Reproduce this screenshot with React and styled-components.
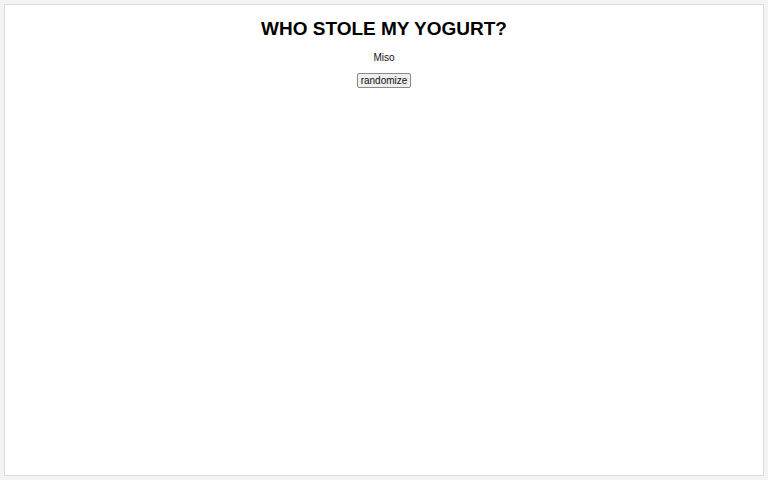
import React, { useState } from "react";
import styled, { createGlobalStyle } from "styled-components";

const Global = createGlobalStyle`
  html, body { margin: 0; padding: 0; height: 100%; }
  body { background: #f3f3f3; font-family: "Liberation Sans", Arial, sans-serif; }
  #root { height: 100%; }
`;

const Page = styled.div`
  box-sizing: border-box;
  height: 480px;
  padding: 4px;
  display: flex;
`;

const Card = styled.main`
  flex: 1;
  background: #ffffff;
  border: 1px solid #dcdcdc;
  display: flex;
  flex-direction: column;
  align-items: center;
  padding-top: 12px;
`;

const Title = styled.h1`
  margin: 0;
  font-size: 19px;
  font-weight: bold;
  color: #000;
  line-height: 23px;
`;

const Name = styled.p`
  margin: 12px 0 0;
  font-size: 10px;
  line-height: 12px;
  color: #111;
`;

const Button = styled.button`
  margin-top: 9px;
  font-family: "Liberation Sans", Arial, sans-serif;
  font-size: 10px;
  line-height: 11px;
  padding: 1px 3px;
  background: #efefef;
  border: 1px solid #8a8a8a;
  border-radius: 2px;
  color: #111;
`;

const names = ["Miso", "Tofu", "Mochi", "Udon", "Natto"];

export default function App() {
  const [name, setName] = useState("Miso");
  return (
    <>
      <Global />
      <Page>
        <Card>
          <Title>WHO STOLE MY YOGURT?</Title>
          <Name>{name}</Name>
          <Button onClick={() => setName(names[Math.floor(Math.random() * names.length)])}>
            randomize
          </Button>
        </Card>
      </Page>
    </>
  );
}
